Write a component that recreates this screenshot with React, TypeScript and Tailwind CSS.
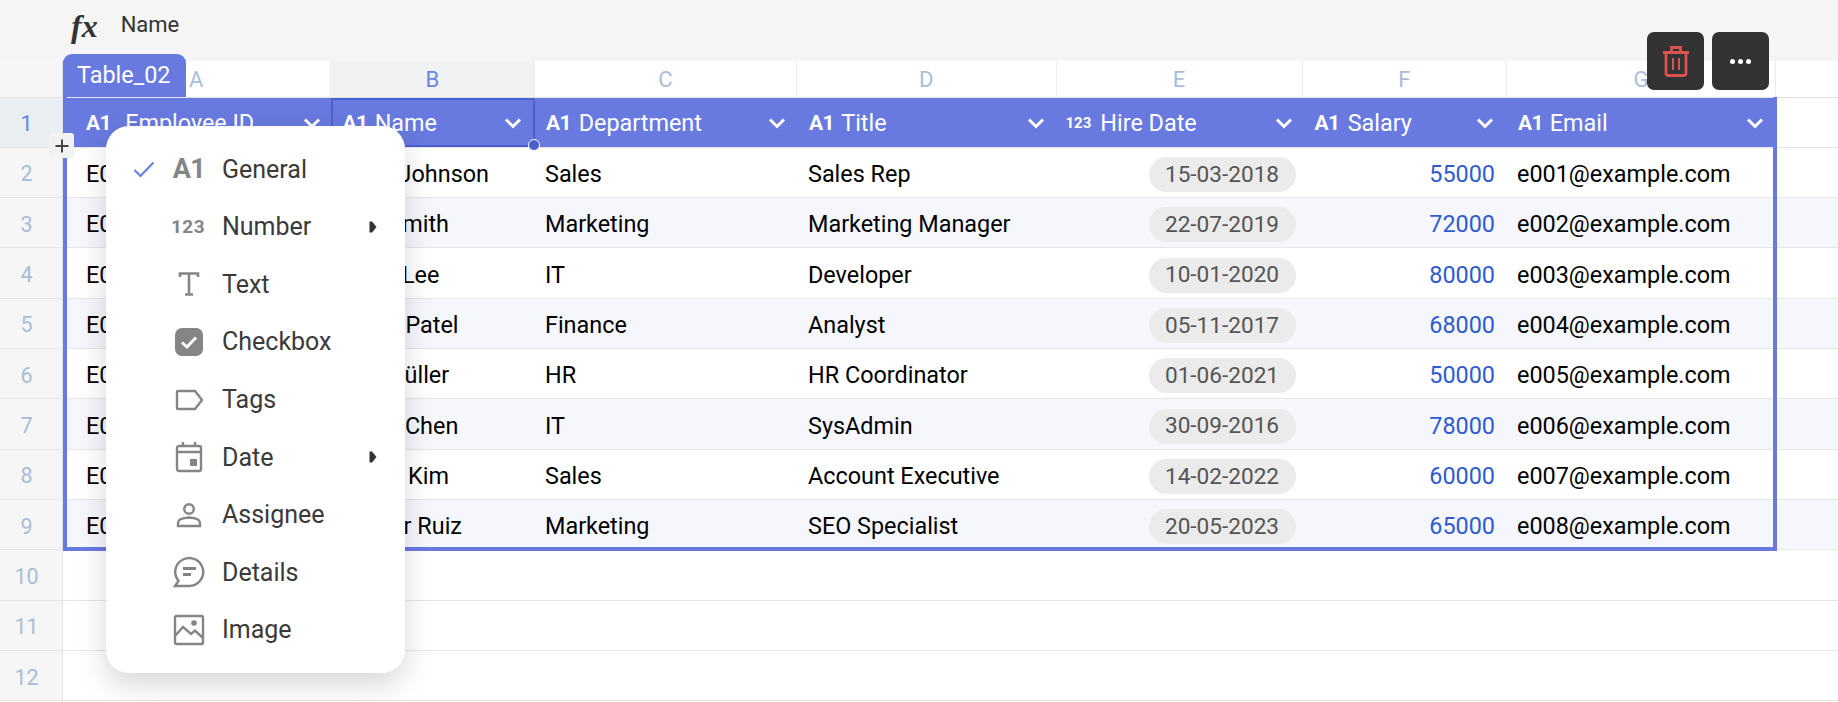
import type { ReactNode } from "react";

const columns = [
	{ key: "A", width: "w-[267.5px]", head: "w-[267.5px] pl-[23px] pr-[10px]", cell: "w-[267.5px] pl-[23px]", label: "Employee ID", type: "A1", gap: "mr-[14px]" },
	{ key: "B", width: "w-[204.5px]", head: "w-[204.5px] pl-[10px] pr-[11px]", cell: "w-[204.5px] pl-[11px]", label: "Name", type: "A1", gap: "mr-[7px]" },
	{ key: "C", width: "w-[262px]", head: "w-[262px] pl-[11px] pr-[11px]", cell: "w-[262px] pl-[10px]", label: "Department", type: "A1", gap: "mr-[7.5px]" },
	{ key: "D", width: "w-[259.5px]", head: "w-[259.5px] pl-[12px] pr-[12px]", cell: "w-[259.5px] pl-[11px]", label: "Title", type: "A1", gap: "mr-[7px]" },
	{ key: "E", width: "w-[246px]", head: "w-[246px] pl-[9px] pr-[10px]", cell: "w-[246px]", label: "Hire Date", type: "123", gap: "mr-[9px]" },
	{ key: "F", width: "w-[204.5px]", head: "w-[204.5px] pl-[12px] pr-[13px]", cell: "w-[204.5px]", label: "Salary", type: "A1", gap: "mr-[8px]" },
	{ key: "G", width: "w-[269px]", head: "w-[269px] pl-[11px] pr-[12px]", cell: "w-[269px] pl-[10px]", label: "Email", type: "A1", gap: "mr-[6.5px]" },
];

const people = [
	["E001", "Alice Johnson", "Sales", "Sales Rep", "15-03-2018", "55000", "e001@example.com"],
	["E002", "Bob Smith", "Marketing", "Marketing Manager", "22-07-2019", "72000", "e002@example.com"],
	["E003", "Carol Lee", "IT", "Developer", "10-01-2020", "80000", "e003@example.com"],
	["E004", "David Patel", "Finance", "Analyst", "05-11-2017", "68000", "e004@example.com"],
	["E005", "Eva Müller", "HR", "HR Coordinator", "01-06-2021", "50000", "e005@example.com"],
	["E006", "Frank Chen", "IT", "SysAdmin", "30-09-2016", "78000", "e006@example.com"],
	["E007", "Grace Kim", "Sales", "Account Executive", "14-02-2022", "60000", "e007@example.com"],
	["E008", "Hector Ruiz", "Marketing", "SEO Specialist", "20-05-2023", "65000", "e008@example.com"],
];

function Chevron() {
	return (
		<svg width="18" height="12" viewBox="0 0 18 12" fill="none" className="mb-[2px] ml-auto shrink-0">
			<path d="M2 2.5 L9 9.5 L16 2.5" stroke="white" strokeWidth="3" />
		</svg>
	);
}

function RowNumber({ n, active }: { n: number; active?: boolean }) {
	return (
		<div
			className={`flex w-[63px] shrink-0 items-center justify-center border-r border-[#e2e2e2] pt-[4px] pr-[9px] text-[21.5px] ${
				active ? "bg-[#e9eef3] text-[#6a85e8]" : "bg-[#f6f6f6] text-[#a9bdd8]"
			}`}
		>
			{n}
		</div>
	);
}

function HeaderRow() {
	return (
		<div className="flex h-[50.33px] border-b border-[#e6e6e6]">
			<RowNumber n={1} active />
			{columns.map((col) => (
				<div
					key={col.key}
					className={`flex shrink-0 items-center bg-[#687adf] pt-[3.5px] text-[23.4px] text-white ${col.head} ${
						col.key === "B" ? "border-2 border-[#4b60cf]" : ""
					}`}
				>
					{col.type === "A1" ? (
						<span className={`${col.gap} text-[21px] leading-none font-bold tracking-[-0.5px]`}>A1</span>
					) : (
						<span className={`${col.gap} text-[15px] leading-none font-bold`}>123</span>
					)}
					<span className="whitespace-nowrap">{col.label}</span>
					<Chevron />
				</div>
			))}
		</div>
	);
}

function DataRow({ n, values }: { n: number; values: string[] }) {
	return (
		<div className="flex h-[50.33px] border-b border-[#e6e6e6]">
			<RowNumber n={n} />
			<div className={`flex flex-1 pt-[4px] text-[23.4px] text-black ${n % 2 === 1 ? "bg-[#f5f7fd]" : "bg-white"}`}>
				{columns.slice(0, 4).map((col, i) => (
					<div key={col.key} className={`flex shrink-0 items-center whitespace-nowrap ${col.cell}`}>
						{values[i]}
					</div>
				))}
				<div className="flex w-[246px] shrink-0 items-center justify-end pr-[7px]">
					<span className="flex h-[35px] w-[147px] items-center justify-center rounded-full bg-[#ebebeb] text-[22.6px] text-[#555555]">
						{values[4]}
					</span>
				</div>
				<div className="flex w-[204.5px] shrink-0 items-center justify-end pr-[12px] text-[#2f5bd0]">{values[5]}</div>
				<div className="flex w-[269px] shrink-0 items-center pl-[10px]">{values[6]}</div>
			</div>
		</div>
	);
}

function EmptyRow({ n }: { n: number }) {
	return (
		<div className="flex h-[50.33px] border-b border-[#e6e6e6]">
			<RowNumber n={n} />
			<div className="flex-1 bg-white" />
		</div>
	);
}

const gray = "#858585";

const iconA1 = <span className="text-[27px] leading-none font-bold tracking-[-0.5px] text-[#858585]">A1</span>;
const icon123 = <span className="mr-[2px] text-[19px] leading-none font-bold tracking-[0.5px] text-[#858585]">123</span>;
const iconText = (
	<svg width="24" height="26" viewBox="0 0 24 26" fill="none" stroke={gray} strokeWidth="2.6">
		<path d="M3 6 V2.5 H21 V6 M12 2.5 V23.5 M8 23.5 H16" />
	</svg>
);
const iconCheckbox = (
	<svg width="30" height="30" viewBox="0 0 30 30">
		<rect x="1" y="1" width="28" height="28" rx="7" fill={gray} />
		<path d="M8 15.5 L13 20 L22 10.5" fill="none" stroke="white" strokeWidth="3" />
	</svg>
);
const iconTags = (
	<svg width="30" height="24" viewBox="0 0 30 24" fill="none" stroke={gray} strokeWidth="2.4">
		<path d="M3 4 Q3 3 4 3 H21 L28 12 L21 21 H4 Q3 21 3 20 Z" />
	</svg>
);
const iconDate = (
	<svg width="28" height="32" viewBox="0 0 28 32" fill="none" stroke={gray} strokeWidth="2.4">
		<rect x="2" y="5" width="24" height="25" rx="2" />
		<path d="M2 11 H26 M8 1 V5 M20 1 V5" />
		<rect x="15" y="18" width="7" height="7" fill={gray} stroke="none" />
	</svg>
);
const iconAssignee = (
	<svg width="26" height="26" viewBox="0 0 26 26" fill="none" stroke={gray} strokeWidth="2.4">
		<circle cx="13" cy="7" r="4.8" />
		<path d="M2 24 V21 Q2 16 13 15.5 Q24 16 24 21 V24 Z" />
	</svg>
);
const iconDetails = (
	<svg width="32" height="32" viewBox="0 0 32 32" fill="none" stroke={gray} strokeWidth="2.4">
		<path d="M2 30 L5.5 25 A14 14 0 1 1 16 30 Z" />
		<path d="M10 12.5 H23 M10 18.5 H18" strokeWidth="2.8" />
	</svg>
);
const iconImage = (
	<svg width="32" height="32" viewBox="0 0 32 32" fill="none" stroke={gray} strokeWidth="2.4">
		<rect x="2" y="2" width="28" height="28" rx="1.5" />
		<path d="M2 22 L10 13 L18 20 L22 16.5 L30 24" />
		<circle cx="21" cy="9" r="2.8" fill={gray} stroke="none" />
	</svg>
);

const menuItems: { label: string; icon: ReactNode; checked?: boolean; sub?: boolean }[] = [
	{ label: "General", icon: iconA1, checked: true },
	{ label: "Number", icon: icon123, sub: true },
	{ label: "Text", icon: iconText },
	{ label: "Checkbox", icon: iconCheckbox },
	{ label: "Tags", icon: iconTags },
	{ label: "Date", icon: iconDate, sub: true },
	{ label: "Assignee", icon: iconAssignee },
	{ label: "Details", icon: iconDetails },
	{ label: "Image", icon: iconImage },
];

function TypeMenu() {
	return (
		<div className="absolute top-[126px] left-[106px] z-30 flex w-[299px] flex-col rounded-[23px] bg-white pt-[14.5px] pb-[14px] shadow-[0_12px_30px_rgba(0,0,0,0.16)]">
			{menuItems.map((item) => (
				<div key={item.label} className="flex h-[57.6px] items-center text-[25px] text-[#3a3a3a]">
					<div className="flex w-[65px] justify-end pr-[16px]">
						{item.checked && (
							<svg width="22" height="17" viewBox="0 0 22 17" fill="none">
								<path d="M1.5 9 L7.5 15 L20.5 1.5" stroke="#6a80e6" strokeWidth="2.2" />
							</svg>
						)}
					</div>
					<div className="flex w-[36px] shrink-0 justify-center">{item.icon}</div>
					<span className="ml-[15px]">{item.label}</span>
					{item.sub && (
						<svg width="8" height="12" viewBox="0 0 8 12" className="mr-[28px] ml-auto">
							<path d="M0.5 0.5 H3 L7.5 6 L3 11.5 H0.5 Z" fill="#333333" />
						</svg>
					)}
				</div>
			))}
		</div>
	);
}

export default function App() {
	return (
		<div className="relative h-[702px] w-full overflow-hidden bg-white font-['Roboto',sans-serif]">
			<div className="flex h-[61px] items-center bg-[#f5f5f5] pb-[10px] pl-[71px]">
				<span className="font-['Liberation_Serif',serif] text-[32px] leading-none font-bold text-[#333333] italic">fx</span>
				<span className="-mt-[2px] ml-[23px] text-[22px] text-[#333333]">Name</span>
			</div>

			<div className="flex h-[36.5px] border-b border-[#e2e2e2]">
				<div className="w-[63px] shrink-0 border-r border-[#e2e2e2] bg-[#f6f6f6]" />
				{columns.map((col) => (
					<div
						key={col.key}
						className={`flex shrink-0 items-center justify-center border-r border-[#ececec] pt-[1px] text-[22px] ${col.width} ${
							col.key === "B" ? "bg-[#f1f2f4] text-[#6a85e8]" : "text-[#a9bdd8]"
						}`}
					>
						{col.key}
					</div>
				))}
			</div>

			<HeaderRow />
			{people.map((values, i) => (
				<DataRow key={values[0]} n={i + 2} values={values} />
			))}
			{[10, 11, 12].map((n) => (
				<EmptyRow key={n} n={n} />
			))}

			{/* table outline */}
			<div className="pointer-events-none absolute top-[97px] left-[63px] z-10 h-[454px] w-[1714px] border-4 border-t-0 border-[#687adf]" />

			<div className="absolute top-[54px] left-[63px] z-20 flex h-[43px] w-[123px] items-center rounded-t-[9px] bg-[#687adf] pl-[14px] text-[23.4px] text-white">
				Table_02
			</div>

			{/* fill handle of the selected cell */}
			<div className="absolute top-[139px] left-[528px] z-20 h-[12px] w-[12px] rounded-full border-[1.5px] border-white bg-[#4b60cf]" />

			<div className="absolute top-[133px] left-[49px] z-20 flex h-[25px] w-[25px] items-center justify-center rounded-[3px] bg-[#f2f2f2]">
				<svg width="16" height="16" viewBox="0 0 16 16">
					<path d="M8 1.5 V14.5 M1.5 8 H14.5" stroke="#444444" strokeWidth="2" />
				</svg>
			</div>

			<div className="absolute top-[32px] left-[1647px] z-20 flex gap-[8px]">
				<button className="flex h-[58px] w-[57px] items-center justify-center rounded-[7px] bg-[#333333]">
					<svg width="28" height="31" viewBox="0 0 28 31" fill="none" stroke="#d9534f" strokeWidth="2.8">
						<path d="M1 6.5 H27 M9.5 6.5 V1.5 H18.5 V6.5" />
						<path d="M4 6.5 V27 Q4 29.5 6.5 29.5 H21.5 Q24 29.5 24 27 V6.5" />
						<path d="M11 12 V24 M17 12 V24" strokeWidth="2" />
					</svg>
				</button>
				<button className="flex h-[58px] w-[57px] items-center justify-center gap-[3px] rounded-[7px] bg-[#333333]">
					<span className="h-[5px] w-[5px] rounded-full bg-white" />
					<span className="h-[5px] w-[5px] rounded-full bg-white" />
					<span className="h-[5px] w-[5px] rounded-full bg-white" />
				</button>
			</div>

			<TypeMenu />
		</div>
	);
}
